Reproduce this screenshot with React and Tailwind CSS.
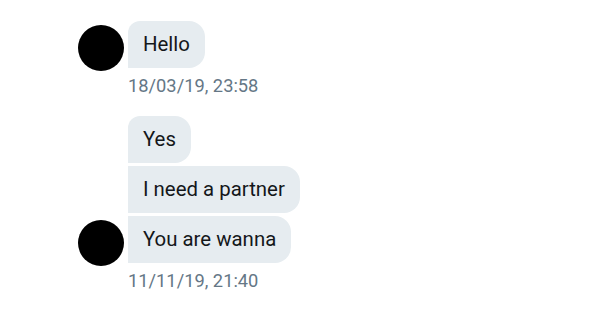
const groups = [
  { messages: ['Hello'], time: '18/03/19, 23:58' },
  { messages: ['Yes', 'I need a partner', 'You are wanna'], time: '11/11/19, 21:40' },
]

function Bubble({ text, first }) {
  return (
    <div
      className={`self-start bg-[#e6ecf0] text-[#14171a] text-[20.4px] leading-[23px] px-[15px] py-3 rounded-r-[16px] ${
        first ? 'rounded-tl-[12px]' : ''
      }`}
    >
      {text}
    </div>
  )
}

export default function App() {
  return (
    <div className="w-[600px] h-[315px] bg-white overflow-hidden pl-[78px] pt-[21px] font-['Roboto',sans-serif]">
      {groups.map((group, gi) => (
        <div key={gi} className={gi > 0 ? 'mt-[18px]' : ''}>
          <div className="flex items-end gap-1">
            <div className="w-[46px] h-[46px] rounded-full bg-black shrink-0 -mb-[3px]" />
            <div className="flex flex-col gap-[3px]">
              {group.messages.map((m, i) => (
                <Bubble key={i} text={m} first={i === 0} />
              ))}
            </div>
          </div>
          <div className="ml-[50px] mt-[6px] text-[18.3px] leading-[24px] text-[#657786]">{group.time}</div>
        </div>
      ))}
    </div>
  )
}
